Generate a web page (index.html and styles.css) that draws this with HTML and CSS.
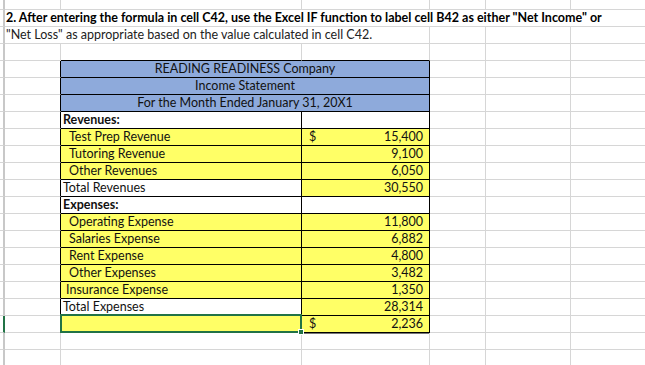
FILE: index.html
```html
<!DOCTYPE html>
<html>
<head>
  <title>Income Statement</title>
  <link rel="stylesheet" href="styles.css">
</head>
<body>

  <div class="sheet">
    <!-- top partial row -->
    <div class="hd"></div><div></div><div></div><div></div><div></div><div></div><div></div>

    <!-- instructions -->
    <div class="hd"></div>
    <div class="note bold span6">2. After entering the formula in cell C42, use the Excel IF function to label cell B42 as either "Net Income" or</div>
    <div class="hd"></div>
    <div class="note span3">"Net Loss" as appropriate based on the value calculated in cell C42.</div>
    <div></div><div></div><div></div>

    <div class="hd"></div><div></div><div class="top"></div><div class="top"></div><div></div><div></div><div></div>

    <!-- statement heading -->
    <div class="hd"></div><div class="edge"></div><div class="title span2">READING READINESS Company</div><div></div><div></div><div></div>
    <div class="hd"></div><div class="edge"></div><div class="title span2">Income Statement</div><div></div><div></div><div></div>
    <div class="hd"></div><div class="edge"></div><div class="title span2">For the Month Ended January 31, 20X1</div><div></div><div></div><div></div>

    <!-- revenues -->
    <div class="hd"></div><div class="edge"></div><div class="lbl bold">Revenues:</div><div class="val"></div><div></div><div></div><div></div>
    <div class="hd"></div><div class="edge"></div><div class="lbl fill indent">Test Prep Revenue</div><div class="val fill"><span>$</span><span>15,400</span></div><div></div><div></div><div></div>
    <div class="hd"></div><div class="edge"></div><div class="lbl fill indent">Tutoring Revenue</div><div class="val fill"><span></span><span>9,100</span></div><div></div><div></div><div></div>
    <div class="hd"></div><div class="edge"></div><div class="lbl fill indent">Other Revenues</div><div class="val fill"><span></span><span>6,050</span></div><div></div><div></div><div></div>
    <div class="hd"></div><div class="edge"></div><div class="lbl">Total Revenues</div><div class="val fill"><span></span><span>30,550</span></div><div></div><div></div><div></div>

    <!-- expenses -->
    <div class="hd"></div><div class="edge"></div><div class="lbl bold">Expenses:</div><div class="val"></div><div></div><div></div><div></div>
    <div class="hd"></div><div class="edge"></div><div class="lbl fill indent">Operating Expense</div><div class="val fill"><span></span><span>11,800</span></div><div></div><div></div><div></div>
    <div class="hd"></div><div class="edge"></div><div class="lbl fill indent">Salaries Expense</div><div class="val fill"><span></span><span>6,882</span></div><div></div><div></div><div></div>
    <div class="hd"></div><div class="edge"></div><div class="lbl fill indent">Rent Expense</div><div class="val fill"><span></span><span>4,800</span></div><div></div><div></div><div></div>
    <div class="hd"></div><div class="edge"></div><div class="lbl fill indent">Other Expenses</div><div class="val fill"><span></span><span>3,482</span></div><div></div><div></div><div></div>
    <div class="hd"></div><div class="edge"></div><div class="lbl fill half">Insurance Expense</div><div class="val fill"><span></span><span>1,350</span></div><div></div><div></div><div></div>
    <div class="hd"></div><div class="edge"></div><div class="lbl">Total Expenses</div><div class="val fill"><span></span><span>28,314</span></div><div></div><div></div><div></div>

    <!-- net income row, B42 selected -->
    <div class="hd active"></div><div class="edge"></div><div class="lbl fill selected"><div class="sel"><i class="handle"></i></div></div><div class="val fill net"><span>$</span><span>2,236</span></div><div></div><div></div><div></div>

    <div class="hd"></div><div></div><div></div><div></div><div></div><div></div><div></div>
    <div class="hd"></div><div></div><div></div><div></div><div></div><div></div><div></div>
  </div>

</body>
</html>
```

FILE: styles.css
```css
body {
  margin: 0;
  background-color: #fff;
  overflow: hidden;
  font-family: Lato, "Liberation Sans", sans-serif;
  font-size: 12.5px;
  color: #111;
}

.sheet {
  display: grid;
  grid-template-columns: 5px 56px 241px 128px 56px 85px minmax(0, 1fr);
  grid-template-rows: 10px;
  grid-auto-rows: 17px;
  width: calc(100% + 1px);
}

.sheet > div {
  box-sizing: border-box;
  border-right: 1px solid #d6d6d6;
  border-bottom: 1px solid #d6d6d6;
  line-height: 16px;
  white-space: nowrap;
}

.sheet > .hd {
  border-right: 2px solid #c8c8c8;
}

.sheet > .hd.active {
  border-right-color: #217346;
}

.span2 { grid-column: span 2; }
.span3 { grid-column: span 3; }
.span6 { grid-column: span 6; }

.bold { font-weight: bold; }

.note {
  padding-left: 1px;
  color: #222;
}

.note.bold {
  color: #000;
}

.sheet > .top {
  border-bottom-color: #000;
}

.sheet > .edge {
  border-right-color: #000;
}

.sheet > .title {
  background-color: #8eaadb;
  border-right-color: #000;
  border-bottom-color: #000;
  text-align: center;
}

.sheet > .lbl,
.sheet > .val {
  border-right-color: #000;
  border-bottom-color: #000;
}

.lbl {
  padding-left: 2px;
}

.lbl.indent {
  padding-left: 8px;
}

.lbl.half {
  padding-left: 5px;
}

.fill {
  background-color: #ffff66;
}

.val {
  display: flex;
  justify-content: space-between;
  padding: 0 6px 0 7px;
}

.val.net {
  box-shadow: 0 1px 0 #777;
}

.selected {
  position: relative;
}

.sel {
  position: absolute;
  left: -1px;
  top: -2px;
  right: -1px;
  bottom: -1px;
  border: 2px solid #217346;
}

.handle {
  position: absolute;
  right: -4px;
  bottom: -4px;
  width: 4px;
  height: 4px;
  background-color: #217346;
  border: 1px solid #fff;
}
```
